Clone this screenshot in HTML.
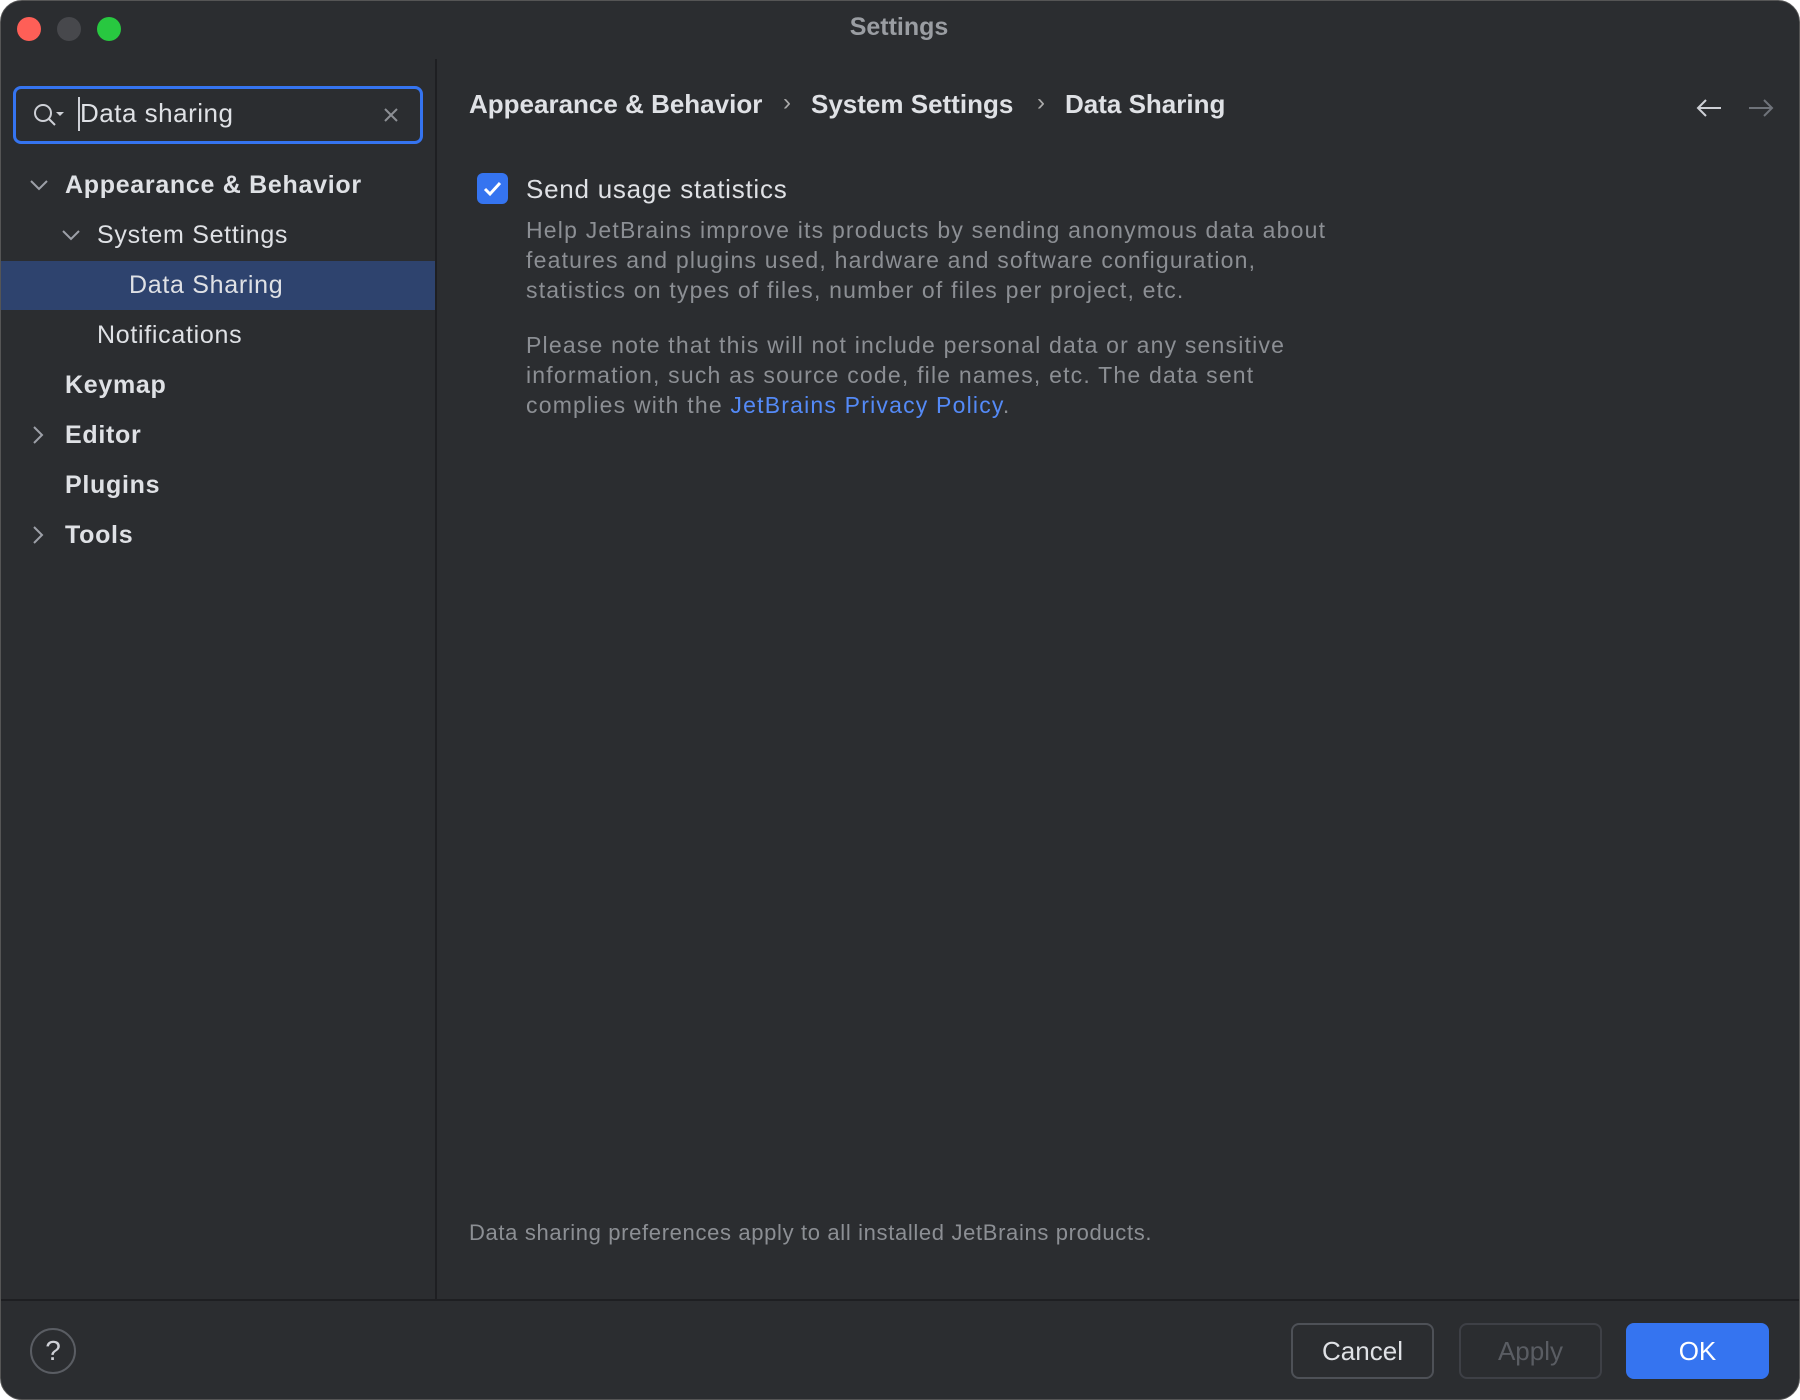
<!DOCTYPE html>
<html><head><meta charset="utf-8"><style>
*{margin:0;padding:0;box-sizing:border-box}
body{width:1800px;height:1400px;background:#fff;font-family:"Liberation Sans",sans-serif;overflow:hidden;position:relative}
.win{position:absolute;left:0;top:0;width:1800px;height:1400px;background:#2b2d30;border-radius:22px;overflow:hidden;border:1px solid #555}
.a{position:absolute;white-space:nowrap}
.dot{position:absolute;width:24px;height:24px;border-radius:50%;top:16px}
.t{font-size:25px;color:#dfe1e5;letter-spacing:0.7px}
.b{font-weight:bold}
.g{color:#8c8f94;font-size:23px;letter-spacing:1.2px}
.btn{position:absolute;top:1322px;height:56px;width:143px;border-radius:8px;border:2px solid #4e5157;font-size:26px;color:#dfe1e5;display:flex;align-items:center;justify-content:center}
</style></head><body><div class="win">
<div class="dot" style="left:16px;background:#fe5f57"></div>
<div class="dot" style="left:56px;background:#47484c"></div>
<div class="dot" style="left:96px;background:#28c840"></div>
<div class="a b" style="left:0;width:1796px;text-align:center;top:12px;font-size:25px;color:#9a9da2">Settings</div>
<div class="a" style="left:434px;top:58px;width:2px;height:1240px;background:#1e1f22"></div>
<div class="a" style="left:12px;top:85px;width:410px;height:58px;border:3px solid #3574f0;border-radius:8px"></div>
<svg class="a" style="left:30px;top:100px" width="36" height="30"><circle cx="12" cy="12" r="8" fill="none" stroke="#ced0d6" stroke-width="2"/><line x1="18" y1="18" x2="24" y2="24" stroke="#ced0d6" stroke-width="2"/><path d="M25 11 L33 11 L29 15Z" fill="#ced0d6"/></svg>
<div class="a" style="left:77px;top:96px;width:2px;height:34px;background:#ced0d6"></div>
<div class="a t" style="left:79px;top:97px;font-size:26px;letter-spacing:0.5px">Data sharing</div>
<svg class="a" style="left:382px;top:106px" width="16" height="16"><path d="M2 2L14 14M14 2L2 14" stroke="#8c8f94" stroke-width="2"/></svg>
<div class="a" style="left:0;top:260px;width:434px;height:49px;background:#2e436e"></div>
<svg class="a" style="left:28px;top:177px" width="20" height="14"><path d="M2 3L10 11L18 3" fill="none" stroke="#9da0a8" stroke-width="2"/></svg>
<svg class="a" style="left:60px;top:227px" width="20" height="14"><path d="M2 3L10 11L18 3" fill="none" stroke="#9da0a8" stroke-width="2"/></svg>
<svg class="a" style="left:30px;top:424px" width="14" height="20"><path d="M3 2L11 10L3 18" fill="none" stroke="#9da0a8" stroke-width="2"/></svg>
<svg class="a" style="left:30px;top:524px" width="14" height="20"><path d="M3 2L11 10L3 18" fill="none" stroke="#9da0a8" stroke-width="2"/></svg>
<div class="a t b" style="left:64px;top:170px">Appearance &amp; Behavior</div>
<div class="a t" style="left:96px;top:220px">System Settings</div>
<div class="a t" style="left:128px;top:270px">Data Sharing</div>
<div class="a t" style="left:96px;top:320px">Notifications</div>
<div class="a t b" style="left:64px;top:370px">Keymap</div>
<div class="a t b" style="left:64px;top:420px">Editor</div>
<div class="a t b" style="left:64px;top:470px">Plugins</div>
<div class="a t b" style="left:64px;top:520px">Tools</div>
<div class="a t b" style="left:468px;top:88px;font-size:26px;letter-spacing:0">Appearance &amp; Behavior</div>
<div class="a t" style="left:782px;top:88px;font-size:24px;color:#aaa">›</div>
<div class="a t b" style="left:810px;top:88px;font-size:26px;letter-spacing:0">System Settings</div>
<div class="a t" style="left:1036px;top:88px;font-size:24px;color:#aaa">›</div>
<div class="a t b" style="left:1064px;top:88px;font-size:26px;letter-spacing:0">Data Sharing</div>
<svg class="a" style="left:1694px;top:96px" width="28" height="22"><path d="M26 11H3M11 3L3 11L11 19" fill="none" stroke="#ced0d6" stroke-width="2"/></svg>
<svg class="a" style="left:1746px;top:96px" width="28" height="22"><path d="M2 11H25M17 3L25 11L17 19" fill="none" stroke="#6f737a" stroke-width="2"/></svg>
<div class="a" style="left:476px;top:172px;width:31px;height:31px;background:#3574f0;border-radius:6px"></div>
<svg class="a" style="left:476px;top:172px" width="31" height="31"><path d="M8 16L13 21L23 10" fill="none" stroke="#fff" stroke-width="3"/></svg>
<div class="a t" style="left:525px;top:173px;font-size:26px;letter-spacing:0.75px">Send usage statistics</div>
<div class="a g" style="left:525px;top:214px;line-height:30px">Help JetBrains improve its products by sending anonymous data about<br>features and plugins used, hardware and software configuration,<br>statistics on types of files, number of files per project, etc.</div>
<div class="a g" style="left:525px;top:329px;line-height:30px">Please note that this will not include personal data or any sensitive<br>information, such as source code, file names, etc. The data sent<br>complies with the <span style="color:#548af7">JetBrains Privacy Policy</span>.</div>
<div class="a g" style="left:468px;top:1219px;font-size:22px;letter-spacing:0.65px">Data sharing preferences apply to all installed JetBrains products.</div>
<div class="a" style="left:0;top:1298px;width:1800px;height:2px;background:#1e1f22"></div>
<div class="a" style="left:29px;top:1327px;width:46px;height:46px;border:2px solid #5a5d63;border-radius:50%;color:#ced0d6;font-size:28px;text-align:center;line-height:42px">?</div>
<div class="btn" style="left:1290px">Cancel</div>
<div class="btn" style="left:1458px;color:#5a5d63;border-color:#3e4046">Apply</div>
<div class="btn" style="left:1625px;background:#3574f0;border-color:#3574f0;color:#fff">OK</div>
</div></body></html>
